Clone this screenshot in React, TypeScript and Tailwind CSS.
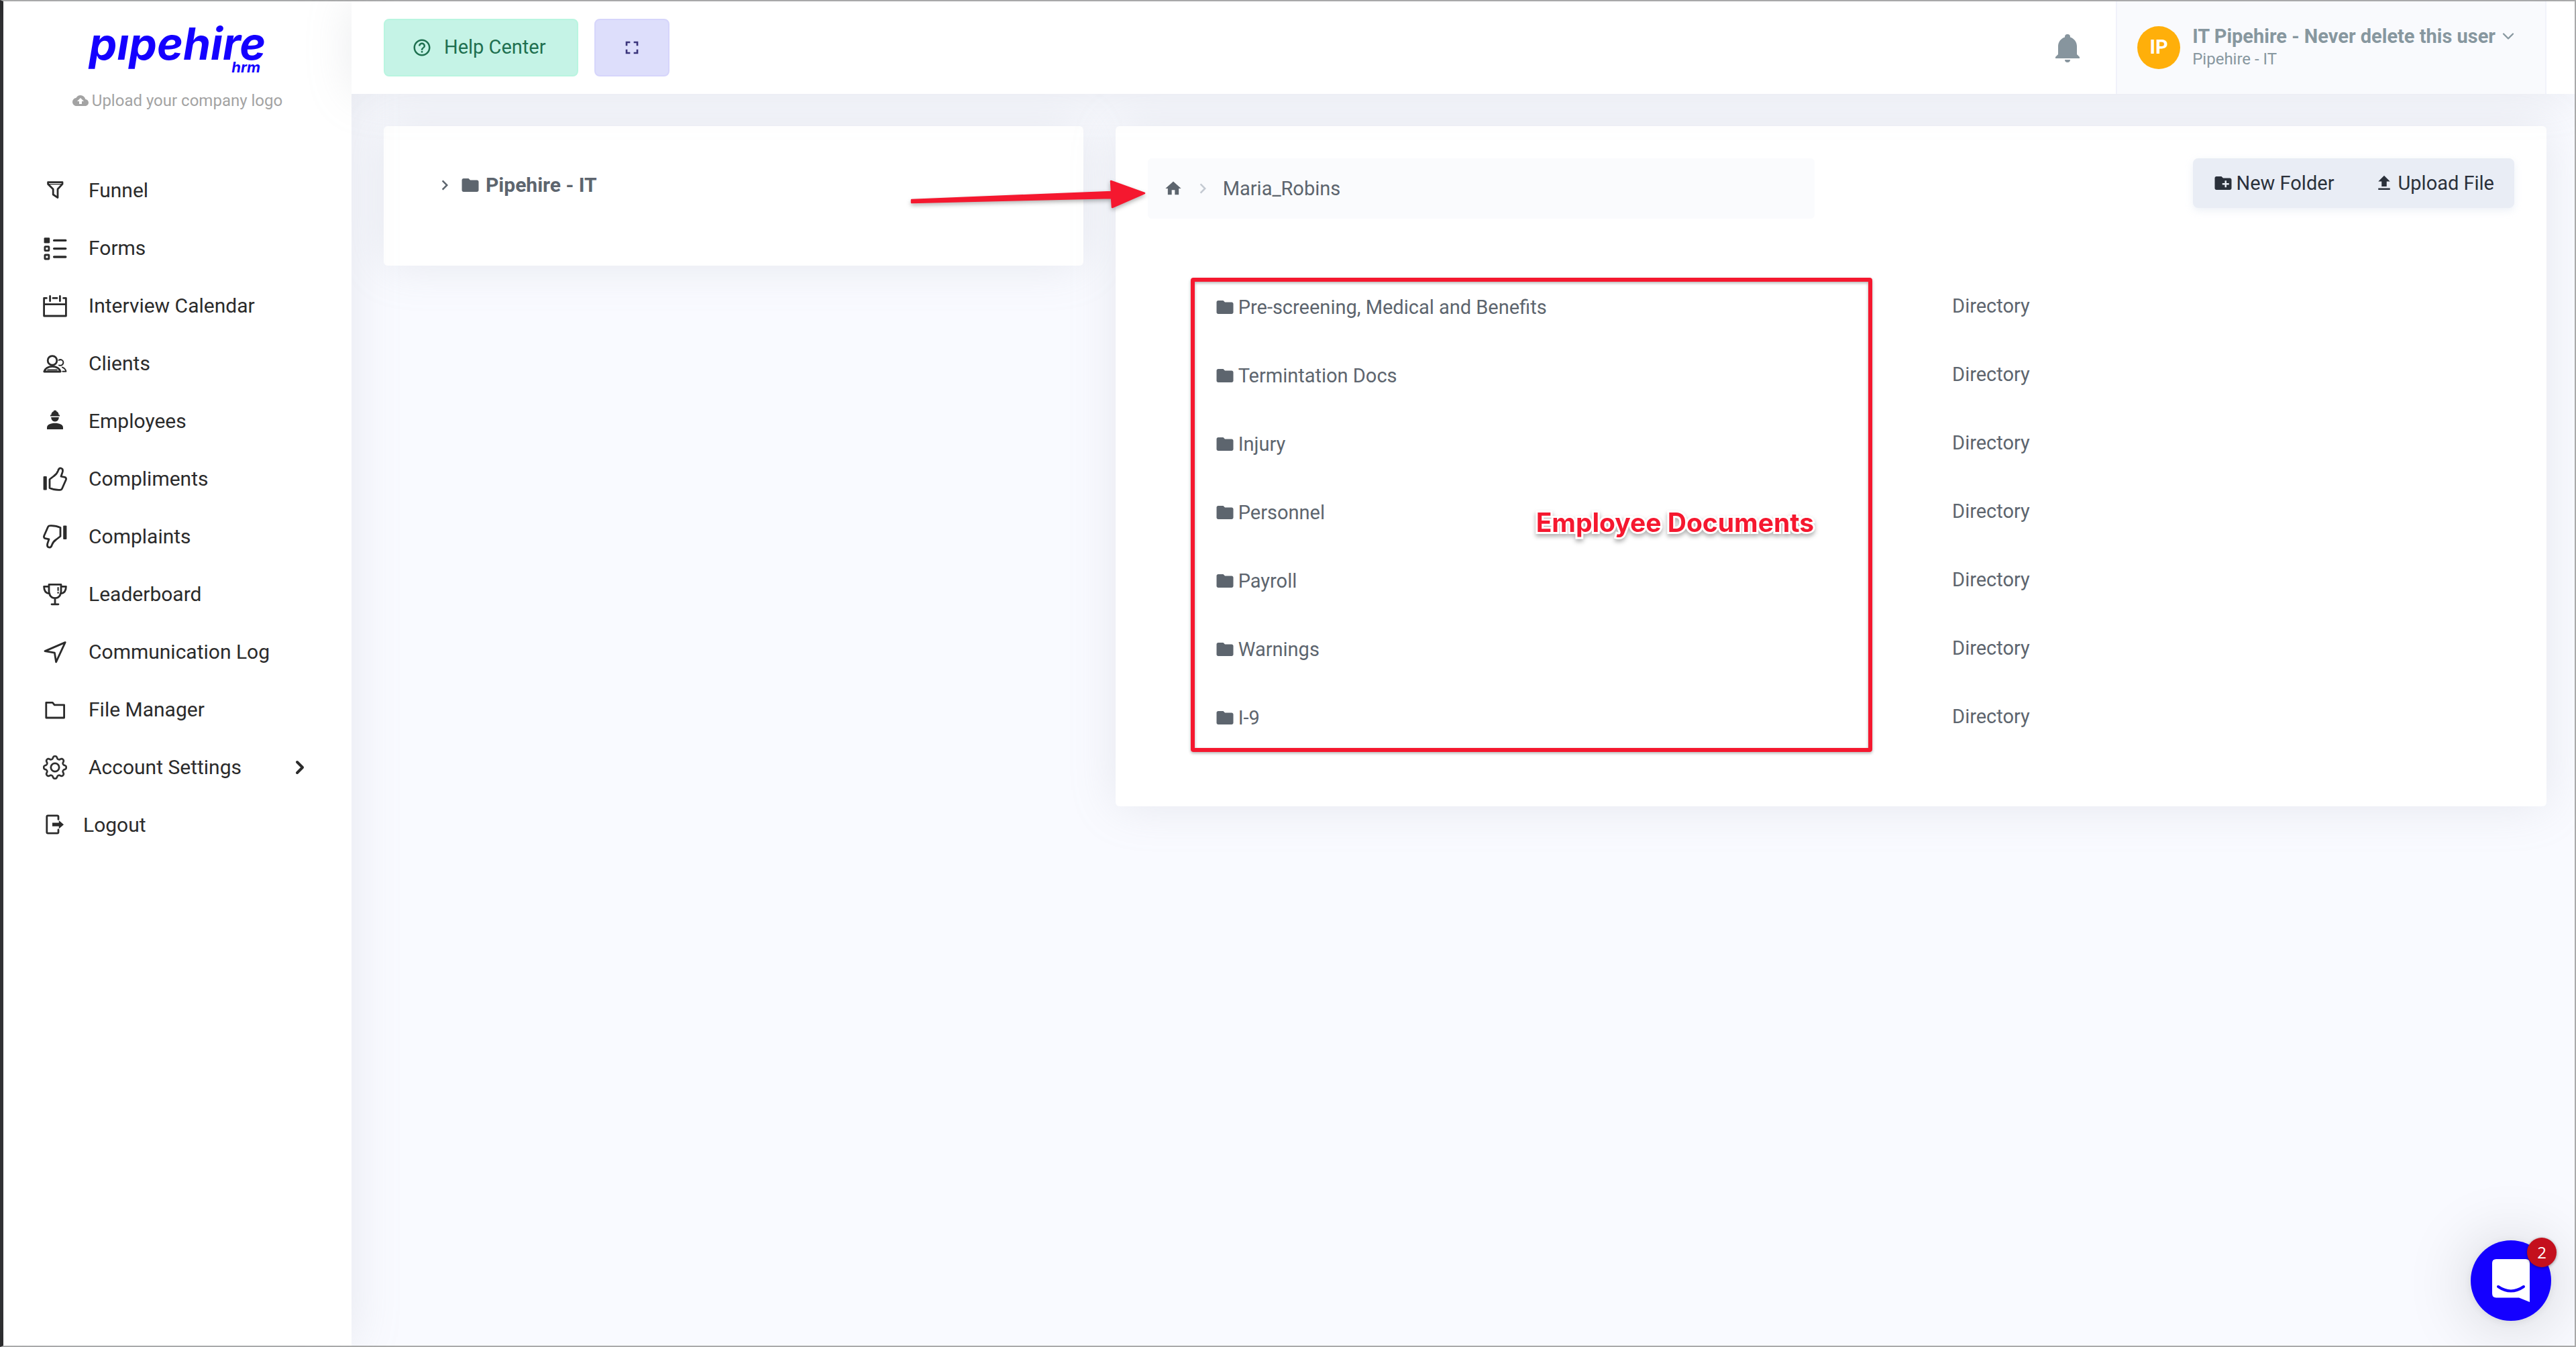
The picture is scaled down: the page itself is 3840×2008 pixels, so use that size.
import type { ReactNode } from "react";
import { BsGear } from "react-icons/bs";
import {
  MdChevronRight,
  MdCloudUpload,
  MdCreateNewFolder,
  MdFolder,
  MdFullscreen,
  MdHelpOutline,
  MdHome,
  MdUpload,
} from "react-icons/md";
import { ChevronDown, ChevronRight } from "lucide-react";

function Line({ children }: { children: ReactNode }) {
  return (
    <svg
      viewBox="0 0 36 36"
      className="size-9 shrink-0"
      fill="none"
      stroke="currentColor"
      strokeWidth="2.8"
      strokeLinecap="round"
      strokeLinejoin="round"
      aria-hidden="true"
    >
      {children}
    </svg>
  );
}

const thumb = (
  <>
    <rect x="0.6" y="14" width="5.2" height="20.6" rx="1" fill="currentColor" stroke="none" />
    <path d="M10 18.5 16.5 13.5C20 11 21.5 9 22.6 5.6 23.4 2.6 25 1.6 27 2 29.4 2.6 29.9 4.8 29.2 7.6L27 14.2 32.6 15.4C34.4 15.9 34.9 17.6 34.3 19.2L28.6 32.2C27.9 33.8 27 34.4 25.2 34.4 20 34.6 15 34 10 31.6Z" />
  </>
);

const icons: Record<string, ReactNode> = {
  funnel: (
    <Line>
      <path d="M7.6 5.6H29V8.4L22 16V28.6L15.2 24V16L7.6 8.4Z" />
      <path d="M9 8.6H27.6" strokeWidth="1.4" />
    </Line>
  ),
  forms: (
    <Line>
      <rect x="1.6" y="2.2" width="8.6" height="8.4" rx="1.4" fill="currentColor" stroke="none" />
      <rect x="2.9" y="15.6" width="6" height="6" rx="0.6" />
      <rect x="2.9" y="28" width="6" height="6" rx="0.6" />
      <path d="M16.6 6.4H33.8M16.6 18.6H33.8M16.6 31H33.8" strokeWidth="3.4" />
    </Line>
  ),
  calendar: (
    <Line>
      <path d="M5.4 6.4H1.6V33H34.4V6.4H30.6M15 6.4H21M1.6 15.6H34.4M10.6 3.4V10.8M25.4 3.4V10.8" />
    </Line>
  ),
  clients: (
    <Line>
      <circle cx="14" cy="13.4" r="6.8" />
      <path d="M1.8 30C3.4 25 7 22.4 14 22.4S24.6 25 26.2 30Z" />
      <path d="M7 27.4H21" strokeWidth="1.6" />
      <path d="M23.6 12.8C27 11 30.6 13.2 30.4 16.6 30.2 19.8 27.4 21.4 24 20.6M29 23.6C31.8 24.6 33.8 26.6 34.4 29.8H29.4" strokeWidth="2" />
    </Line>
  ),
  employees: (
    <Line>
      <g fill="currentColor" stroke="none">
        <path d="M12.4 8.6C12.4 5.6 14 3.6 16.2 3V1.8H19.8V3C22 3.6 23.6 5.6 23.6 8.6H25V10.4H11V8.6Z" />
        <path d="M12.2 12H23.8C23.6 16 21.4 18.4 18 18.4S12.4 16 12.2 12Z" />
        <path d="M6 30V27.4C6 23 11.4 20.8 18 20.8S30 23 30 27.4V30Z" />
      </g>
    </Line>
  ),
  up: <Line>{thumb}</Line>,
  down: (
    <Line>
      <g transform="rotate(180 18 18)">{thumb}</g>
    </Line>
  ),
  trophy: (
    <Line>
      <path d="M9 3.4H27V13.6C27 19.6 23.2 23.6 18 23.6S9 19.6 9 13.6ZM18 23.6V32.6M13 32.8H23M9 6.4H1.6C1.6 12 4 16.4 10 17.2M27 6.4H34.4C34.4 12 32 16.4 26 17.2" />
      <path d="M22.6 8V12M22.6 15V16" strokeWidth="2.2" />
    </Line>
  ),
  send: (
    <Line>
      <path d="M33.2 3.6 3 16.6 17.4 19.2 19.6 32.8Z" />
    </Line>
  ),
  folder: (
    <Line>
      <path d="M4.8 7.4H14.4L17.2 10.8H31.6V30H4.8Z" />
    </Line>
  ),
  gear: <BsGear className="size-9 shrink-0" stroke="currentColor" strokeWidth="0.2" />,
  logout: (
    <Line>
      <path d="M23 9.4V5.4C23 4.4 22.4 3.8 21.4 3.8H7.4C6.4 3.8 5.8 4.4 5.8 5.4V28.6C5.8 29.6 6.4 30.2 7.4 30.2H21.4C22.4 30.2 23 29.6 23 28.6V25" />
      <path d="M14 14.6H23.8V11L31 17.2 23.8 23.4V19.8H14Z" fill="currentColor" stroke="none" />
    </Line>
  ),
};

const nav = [
  { label: "Funnel", icon: "funnel" },
  { label: "Forms", icon: "forms" },
  { label: "Interview Calendar", icon: "calendar" },
  { label: "Clients", icon: "clients" },
  { label: "Employees", icon: "employees" },
  { label: "Compliments", icon: "up" },
  { label: "Complaints", icon: "down" },
  { label: "Leaderboard", icon: "trophy" },
  { label: "Communication Log", icon: "send" },
  { label: "File Manager", icon: "folder" },
  { label: "Account Settings", icon: "gear", expandable: true },
];

const folders = [
  "Pre-screening, Medical and Benefits",
  "Termintation Docs",
  "Injury",
  "Personnel",
  "Payroll",
  "Warnings",
  "I-9",
];

function Sidebar() {
  return (
    <aside className="relative z-10 w-[519px] shrink-0 bg-white text-[#2b2b2b] shadow-[0_0_70px_rgba(154,161,171,0.2)]">
      <div className="flex flex-col items-center pt-[31px]">
        <a href="#home" className="flex flex-col font-['Inter',sans-serif] font-bold text-[#1400ff] italic">
          <span className="text-[66px] leading-[64px]">pıpehire</span>
          <span className="-mt-[9px] self-end pr-2 text-[22px] leading-6">hrm</span>
        </a>
        <button type="button" className="mt-[22px] flex items-center gap-[5px] text-2xl leading-8 text-[#a3a3a3]">
          <MdCloudUpload className="size-6" />
          Upload your company logo
        </button>
      </div>
      <nav className="mt-[75px]">
        <ul className="text-3xl">
          {nav.map((item) => (
            <li key={item.label}>
              <a href="#nav" className="flex h-[86px] items-center gap-8 pr-[61px] pl-[59px]">
                {icons[item.icon]}
                {item.label}
                {item.expandable && <ChevronRight className="ml-auto size-8 stroke-3" />}
              </a>
            </li>
          ))}
          <li>
            <a href="#logout" className="flex h-[86px] items-center gap-6 pl-[59px]">
              {icons.logout}
              Logout
            </a>
          </li>
        </ul>
      </nav>
    </aside>
  );
}

function Header() {
  return (
    <header className="relative z-20 flex h-[138px] items-center bg-white pr-[42px] pl-12 shadow-[0_0_70px_rgba(154,161,171,0.2)]">
      <button
        type="button"
        className="flex h-[86px] items-center gap-[18px] rounded-lg border-2 border-[#b9f5e0] bg-[#c5f3e6] pr-[46px] pl-10 text-[29px] text-[#1f7050]"
      >
        <MdHelpOutline className="size-[30px]" />
        Help Center
      </button>
      <button
        type="button"
        aria-label="Full screen"
        className="ml-6 flex h-[86px] w-28 items-center justify-center rounded-lg border-2 border-[#d6d5fb] bg-[#dddefb] text-[#3b357c]"
      >
        <MdFullscreen className="size-8" />
      </button>
      <button type="button" aria-label="Notifications" className="mr-12 ml-auto text-[#87959e]">
        <svg viewBox="0 0 24 24" className="size-12" fill="currentColor" aria-hidden="true">
          <path d="M21 19V20H3V19L5 17V11C5 7.9 7.03 5.17 10 4.29V4A2 2 0 0 1 14 4V4.29C16.97 5.17 19 7.9 19 11V17L21 19M14 21A2 2 0 0 1 10 21" />
        </svg>
      </button>
      <button
        type="button"
        className="flex h-full items-center gap-[18px] border-x-2 border-[#f1f2fa] bg-[#f9fafd] pr-[41px] pl-[30px] text-left text-[#87979f]"
      >
        <span className="flex size-16 items-center justify-center rounded-full bg-[#ffaf0a] text-[29px] font-bold text-white">
          IP
        </span>
        <span className="flex flex-col leading-[34px]">
          <span className="flex items-center gap-[5px] text-[29px] font-bold">
            IT Pipehire - Never delete this user
            <ChevronDown className="size-7" />
          </span>
          <span className="text-2xl leading-[34px]">Pipehire - IT</span>
        </span>
      </button>
    </header>
  );
}

function Arrow() {
  return (
    <svg
      viewBox="0 0 352 50"
      className="pointer-events-none absolute top-20 -left-[306px] h-[50px] w-[352px] overflow-visible drop-shadow-[0_3px_3px_rgba(0,0,0,0.3)]"
      aria-hidden="true"
    >
      <path
        d="M2 30 300 18 299 2 349 20 301 41 300 27 2 34Z"
        fill="#f5182f"
        stroke="#f5182f"
        strokeWidth="2.5"
        strokeLinejoin="round"
      />
    </svg>
  );
}

function FolderTable() {
  return (
    <div className="relative mx-[78px] mt-[79px]">
      <table className="w-full table-fixed text-left">
        <tbody>
          {folders.map((name) => (
            <tr key={name} className="h-[102px]">
              <td className="w-7/12 px-[22px] pt-1">
                <a href="#folder" className="flex items-center gap-[5px]">
                  <MdFolder className="size-[30px]" />
                  {name}
                </a>
              </td>
              <td className="px-6">Directory</td>
            </tr>
          ))}
        </tbody>
      </table>
      <div className="pointer-events-none absolute top-[9px] -bottom-[2px] -left-3.5 w-[54%] rounded-sm border-6 border-[#f5182f] shadow-[0_2px_4px_rgba(0,0,0,0.3),inset_0_2px_4px_rgba(0,0,0,0.3)]">
        <span className="absolute top-[337px] left-[509px] font-['Inter',sans-serif] text-[39px] leading-[44px] font-bold whitespace-nowrap text-[#f5182f] drop-shadow-[0_4px_3px_rgba(0,0,0,0.3)] [-webkit-text-stroke:6px_#fff] [paint-order:stroke_fill]">
          Employee Documents
        </span>
      </div>
    </div>
  );
}

export default function App() {
  return (
    <div className="relative flex min-h-screen border-2 border-l-5 border-[#aaaaaa] border-l-[#262628] bg-[#f9faff] font-['Roboto',sans-serif]">
      <Sidebar />
      <div className="min-w-0 flex-1">
        <Header />
        <main className="grid grid-cols-3 items-start gap-12 pt-12 pr-[42px] pl-12 text-[29px] leading-[42px] text-[#5d656e]">
          <section className="rounded-md bg-white pt-[67px] pr-12 pb-[99px] pl-[76px] shadow-[0_0_70px_rgba(154,161,171,0.2)]">
            <button type="button" className="flex items-center text-3xl leading-[42px] font-bold">
              <MdChevronRight className="mr-2 size-[30px]" />
              <MdFolder className="mr-2 size-[30px]" />
              Pipehire - IT
            </button>
          </section>
          <section className="relative col-span-2 rounded-md bg-white px-12 pt-12 pb-[83px] shadow-[0_0_70px_rgba(154,161,171,0.2)]">
            <div className="grid grid-cols-2 items-start gap-12">
              <nav aria-label="Breadcrumb" className="flex items-center gap-[15px] rounded-md bg-[#fafbfd] px-6 py-6">
                <a href="#home" aria-label="Home">
                  <MdHome className="size-7" />
                </a>
                <MdChevronRight className="size-[30px] text-[#c3c9d1]" />
                <a href="#maria">Maria_Robins</a>
              </nav>
              <div className="flex h-[74px] justify-self-end rounded-lg bg-[#e9edf5] text-[#2b313b] shadow-[0_4px_12px_rgba(233,237,245,0.8)]">
                <button type="button" className="flex items-center gap-[5px] px-[30px]">
                  <MdCreateNewFolder className="size-[30px]" />
                  New Folder
                </button>
                <button type="button" className="flex items-center gap-[5px] px-[30px]">
                  <MdUpload className="size-[30px]" />
                  Upload File
                </button>
              </div>
            </div>
            <FolderTable />
            <Arrow />
          </section>
        </main>
      </div>
      <button
        type="button"
        aria-label="Open chat, 2 unread"
        className="absolute right-[35px] bottom-[37px] z-30 flex size-30 items-center justify-center rounded-full bg-[#1400ff] shadow-[0_2px_12px_rgba(0,0,0,0.08),0_4px_100px_rgba(0,0,0,0.18)]"
      >
        <svg viewBox="0 0 58 66" className="h-[66px] w-[58px]" aria-hidden="true">
          <path d="M7 1H51Q57 1 57 7V65L41 58.500H7Q1 58.500 1 52V7Q1 1 7 1Z" fill="#fff" />
          <path d="M10 42Q29 55 48 42" fill="none" stroke="#1400ff" strokeWidth="4" strokeLinecap="round" />
        </svg>
        <span className="absolute -top-1 -right-2 flex size-11 items-center justify-center rounded-full bg-[#c4101d] font-['Open_Sans',sans-serif] text-2xl text-white shadow-[0_1px_4px_rgba(0,0,0,0.4)]">
          2
        </span>
      </button>
    </div>
  );
}
